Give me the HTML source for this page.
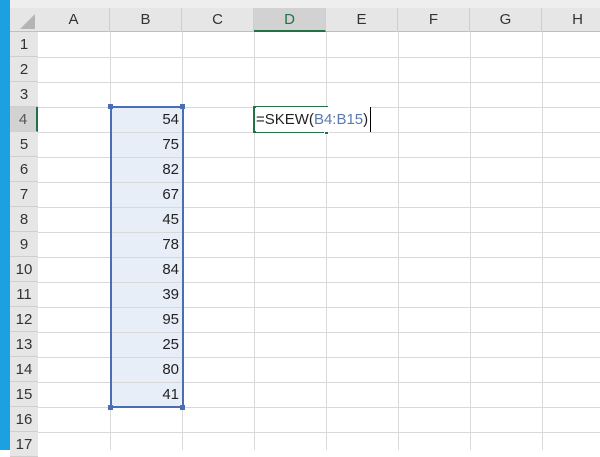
<!DOCTYPE html><html><head><style>
body{margin:0;width:600px;height:450px;overflow:hidden;background:#fff;font-family:"Liberation Sans",Arial,sans-serif;position:relative}
div{position:absolute;box-sizing:border-box}
.vl{top:32px;height:418px;width:1px;background:#d9d9d9}
.hl{left:38px;width:562px;height:1px;background:#d9d9d9}
.ch{top:8px;height:24px;font-size:15px;color:#333;text-align:center;line-height:24px;width:72px;border-right:1px solid #cfcfcf}
.rh{left:10px;width:28px;height:25px;font-size:15px;color:#333;text-align:center;line-height:25px;border-bottom:1px solid #cfcfcf;background:#e6e6e6}
.v{left:110px;width:73px;height:25px;text-align:right;padding-right:4px;font-size:15px;line-height:25px;color:#222}
</style></head><body>
<div style="left:0;top:0;width:10px;height:450px;background:#1ba1e2"></div>
<div style="left:10px;top:0;width:590px;height:8px;background:#eeeeee"></div>
<div style="left:10px;top:8px;width:590px;height:24px;background:#e6e6e6;border-bottom:1px solid #bfbfbf"></div>
<div style="left:10px;top:32px;width:28px;height:418px;background:#e6e6e6;border-right:1px solid #bfbfbf"></div>
<svg style="position:absolute;left:18px;top:14px" width="18" height="16"><polygon points="17,0 17,15 2,15" fill="#b4b4b4"/></svg>
<div class="ch" style="left:38px">A</div>
<div class="ch" style="left:110px">B</div>
<div class="ch" style="left:182px">C</div>
<div class="ch" style="left:254px;background:#d2d2d2;color:#217346;border-bottom:2px solid #217346">D</div>
<div class="ch" style="left:326px">E</div>
<div class="ch" style="left:398px">F</div>
<div class="ch" style="left:470px">G</div>
<div class="ch" style="left:542px">H</div>
<div style="left:110px;top:107px;width:73px;height:300px;background:#e8eef8"></div>
<div class="vl" style="left:110px"></div><div class="vl" style="left:182px"></div><div class="vl" style="left:254px"></div><div class="vl" style="left:326px"></div><div class="vl" style="left:398px"></div><div class="vl" style="left:470px"></div><div class="vl" style="left:542px"></div>
<div class="hl" style="top:57px"></div><div class="hl" style="top:82px"></div><div class="hl" style="top:107px"></div><div class="hl" style="top:132px"></div><div class="hl" style="top:157px"></div><div class="hl" style="top:182px"></div><div class="hl" style="top:207px"></div><div class="hl" style="top:232px"></div><div class="hl" style="top:257px"></div><div class="hl" style="top:282px"></div><div class="hl" style="top:307px"></div><div class="hl" style="top:332px"></div><div class="hl" style="top:357px"></div><div class="hl" style="top:382px"></div><div class="hl" style="top:407px"></div><div class="hl" style="top:432px"></div>
<div class="rh" style="top:32px">1</div><div class="rh" style="top:57px">2</div><div class="rh" style="top:82px">3</div>
<div class="rh" style="top:107px;background:#d2d2d2;color:#555;border-right:2px solid #217346">4</div>
<div class="rh" style="top:132px">5</div><div class="rh" style="top:157px">6</div><div class="rh" style="top:182px">7</div><div class="rh" style="top:207px">8</div><div class="rh" style="top:232px">9</div><div class="rh" style="top:257px">10</div><div class="rh" style="top:282px">11</div><div class="rh" style="top:307px">12</div><div class="rh" style="top:332px">13</div><div class="rh" style="top:357px">14</div><div class="rh" style="top:382px">15</div><div class="rh" style="top:407px">16</div><div class="rh" style="top:432px">17</div>
<div class="v" style="top:107px">54</div><div class="v" style="top:132px">75</div><div class="v" style="top:157px">82</div><div class="v" style="top:182px">67</div><div class="v" style="top:207px">45</div><div class="v" style="top:232px">78</div><div class="v" style="top:257px">84</div><div class="v" style="top:282px">39</div><div class="v" style="top:307px">95</div><div class="v" style="top:332px">25</div><div class="v" style="top:357px">80</div><div class="v" style="top:382px">41</div>
<div style="left:110px;top:106px;width:74px;height:302px;border:2px solid #4a6eb5"></div>
<div style="left:108px;top:104px;width:5px;height:5px;background:#4a6eb5"></div>
<div style="left:180px;top:104px;width:5px;height:5px;background:#4a6eb5"></div>
<div style="left:108px;top:405px;width:5px;height:5px;background:#4a6eb5"></div>
<div style="left:180px;top:405px;width:5px;height:5px;background:#4a6eb5"></div>
<div style="left:253px;top:106px;width:75px;height:27px;border:2px solid #217346;border-right:none"></div>
<div style="left:326px;top:106px;width:2px;height:2px;background:#217346"></div>
<div style="left:324px;top:130px;width:5px;height:5px;background:#217346;border:1px solid #fff"></div>
<div style="left:256px;top:107px;height:25px;line-height:25px;font-size:15px;color:#222;background:#fff;white-space:nowrap;padding-right:2px;border-right:1px solid #000">=SKEW(<span style="color:#5a7bb0">B4:B15</span>)</div>
</body></html>
